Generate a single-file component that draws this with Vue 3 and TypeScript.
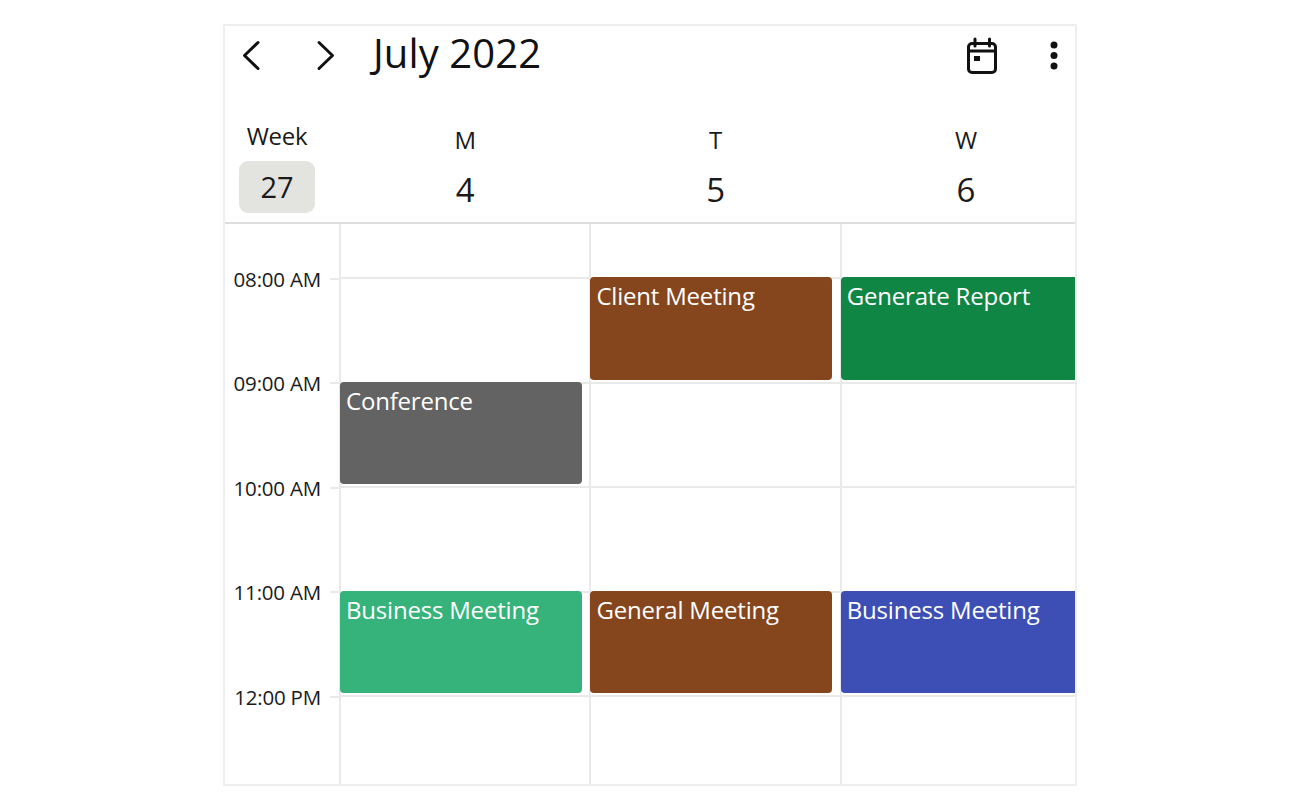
<template>
  <div class="page">
    <div class="scheduler">
      <!-- Toolbar -->
      <div class="toolbar">
        <button class="nav-btn" type="button" aria-label="Previous">
          <svg width="20" height="32" viewBox="0 0 20 32"><path d="M17 2.5 3.5 15.5 17 28.5" /></svg>
        </button>
        <button class="nav-btn" type="button" aria-label="Next">
          <svg width="20" height="32" viewBox="0 0 20 32"><path d="M3 2.5 16.5 15.5 3 28.5" /></svg>
        </button>
        <div class="title">July 2022</div>
        <button class="icon-btn today" type="button" aria-label="Today">
          <svg width="34" height="38" viewBox="0 0 34 38">
            <rect x="3.5" y="6.500" width="27" height="29" rx="3.5" />
            <path d="M3.5 14h27M10 2v7M24.500 2v7" />
            <rect class="fill" x="9" y="19" width="6" height="5" />
          </svg>
        </button>
        <button class="icon-btn more" type="button" aria-label="More">
          <svg width="10" height="32" viewBox="0 0 10 32">
            <circle class="fill" cx="5" cy="5" r="3.5" />
            <circle class="fill" cx="5" cy="15.5" r="3.5" />
            <circle class="fill" cx="5" cy="26" r="3.5" />
          </svg>
        </button>
      </div>

      <!-- Week and day header -->
      <div class="day-header">
        <div class="week-cell">
          <div class="week-label">Week</div>
          <div class="week-badge">27</div>
        </div>
        <div v-for="day in days" :key="day.letter" class="day-cell">
          <div class="day-letter">{{ day.letter }}</div>
          <div class="day-number">{{ day.date }}</div>
        </div>
      </div>

      <!-- Time grid -->
      <div class="grid">
        <div class="times">
          <div v-for="time in times" :key="time" class="time-row">
            <span class="time-label">{{ time }}</span>
            <span class="tick"></span>
          </div>
        </div>
        <div v-for="day in days" :key="day.letter" class="day-column">
          <div v-for="(time, i) in times" :key="time" class="slot">
            <div v-if="day.events[i]" class="event" :style="{ background: day.events[i]!.color }">
              {{ day.events[i]!.title }}
            </div>
          </div>
          <div class="slot"></div>
        </div>
      </div>
    </div>
  </div>
</template>

<script setup lang="ts">
interface CalendarEvent {
  title: string;
  color: string;
}

interface Day {
  letter: string;
  date: number;
  // keyed by index into times
  events: Record<number, CalendarEvent>;
}

const times = ['08:00 AM', '09:00 AM', '10:00 AM', '11:00 AM', '12:00 PM'];

const days: Day[] = [
  {
    letter: 'M',
    date: 4,
    events: {
      1: { title: 'Conference', color: '#636363' },
      3: { title: 'Business Meeting', color: '#36b37b' },
    },
  },
  {
    letter: 'T',
    date: 5,
    events: {
      0: { title: 'Client Meeting', color: '#85461e' },
      3: { title: 'General Meeting', color: '#85461e' },
    },
  },
  {
    letter: 'W',
    date: 6,
    events: {
      0: { title: 'Generate Report', color: '#0f8644' },
      3: { title: 'Business Meeting', color: '#3d4fb5' },
    },
  },
];
</script>

<style>
body {
  background: #fff;
}
</style>

<style scoped>
.page {
  padding: 24px 0 0 223px;
  font-family: "Open Sans", "Noto Sans", "Liberation Sans", sans-serif;
  color: #1a1a1a;
}
.scheduler {
  box-sizing: border-box;
  width: 854px;
  height: 762px;
  border: 2px solid #eeeeee;
  overflow: hidden;
  display: flex;
  flex-direction: column;
}
button {
  all: unset;
  display: flex;
  align-items: center;
  justify-content: center;
}
svg path,
svg rect {
  fill: none;
  stroke: #111;
  stroke-width: 3;
  stroke-linecap: round;
  stroke-linejoin: round;
}
svg .fill {
  fill: #111;
  stroke: none;
}
.toolbar {
  height: 60px;
  flex: none;
  display: flex;
  align-items: center;
}
.nav-btn {
  width: 20px;
  height: 32px;
  margin-left: 16px;
}
.nav-btn + .nav-btn {
  margin-left: 55px;
}
.title {
  margin-left: 37px;
  font-size: 40px;
  line-height: 54px;
  letter-spacing: 0.1px;
  color: #111;
  flex: 1;
  position: relative;
  top: -3px;
}
.today {
  margin-right: 50px;
}
.more {
  margin-right: 16px;
}
.day-header {
  height: 138px;
  flex: none;
  display: flex;
  border-bottom: 2px solid #dedede;
  box-sizing: border-box;
}
.week-cell {
  flex: 0 0 114px;
  display: flex;
  flex-direction: column;
  align-items: center;
  box-sizing: border-box;
  padding: 35px 24px 0 14px;
}
.week-label {
  font-size: 24px;
  line-height: 30px;
  letter-spacing: -0.3px;
  margin-bottom: 10px;
}
.week-badge {
  width: 76px;
  height: 52px;
  border-radius: 9px;
  background: #e3e4e0;
  font-size: 29px;
  line-height: 52px;
  text-align: center;
}
.day-cell {
  flex: 0 0 250.4px;
  box-sizing: border-box;
  text-align: center;
  padding: 39px 0 0 2px;
}
.day-letter {
  font-size: 24px;
  line-height: 30px;
}
.day-number {
  margin-top: 15px;
  font-size: 33px;
  line-height: 40px;
}
.grid {
  flex: 1;
  min-height: 0;
  display: flex;
}
.times {
  flex: 0 0 114px;
  padding-top: 2.3px;
}
.time-row {
  height: 104.6px;
  display: flex;
  align-items: center;
}
.time-label {
  width: 96px;
  text-align: right;
  font-size: 20.5px;
  letter-spacing: -0.2px;
}
.tick {
  flex: 1;
  height: 2px;
  margin-left: 9px;
  background: #e9e9e9;
}
.day-column {
  flex: 0 0 250.4px;
  box-sizing: border-box;
  border-left: 2px solid #e9e9e9;
  display: grid;
  grid-template-rows: 53px repeat(5, 104.6px);
  grid-auto-rows: 1fr;
}
.day-column::before {
  content: "";
}
.slot {
  box-sizing: border-box;
  border-top: 2px solid #e9e9e9;
  padding: 0 7.6px 2px 0;
  display: flex;
}
.event {
  flex: 1;
  box-sizing: border-box;
  margin: -1.6px 0 0 -1px;
  padding: 2.6px 6px 2px;
  border-radius: 4px;
  color: #fff;
  font-size: 24px;
  line-height: 32px;
  letter-spacing: -0.2px;
  white-space: nowrap;
}
</style>
